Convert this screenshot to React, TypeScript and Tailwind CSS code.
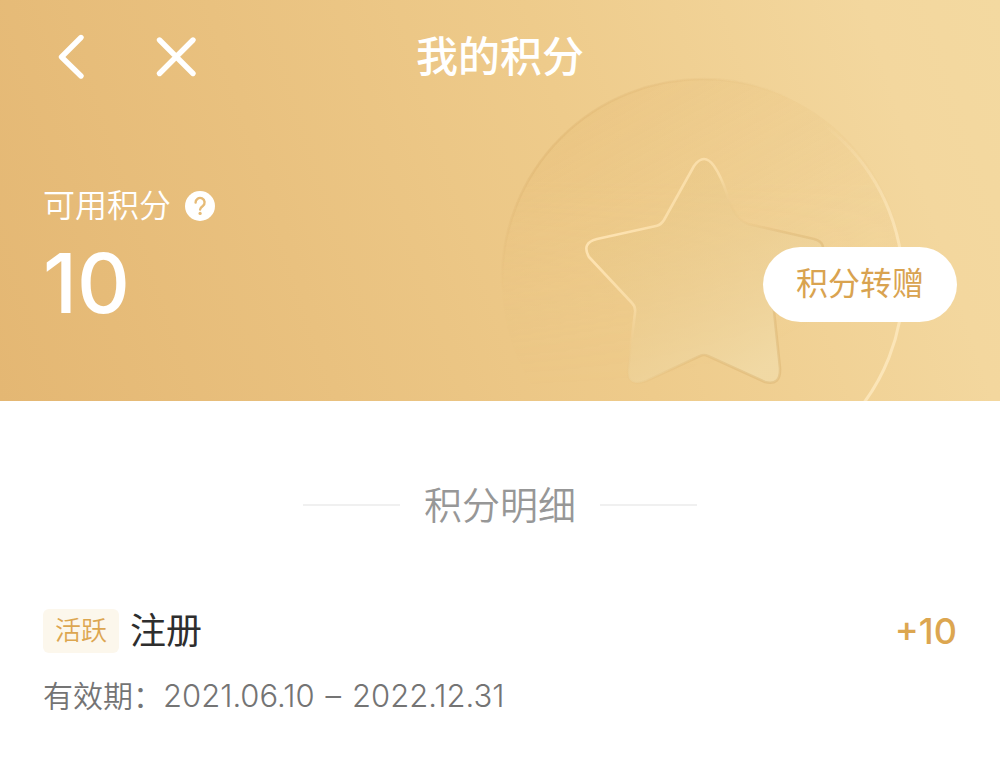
import React from "react";

type PointRecord = {
  tag: string;
  title: string;
  from: string;
  to: string;
  amount: number;
};

const records: PointRecord[] = [
  { tag: "活跃", title: "注册", from: "2021.06.10", to: "2022.12.31", amount: 10 },
];

function Medal() {
  return (
    <svg
      className="pointer-events-none absolute right-0 top-0 h-full w-[500px]"
      viewBox="500 0 500 401"
      fill="none"
      aria-hidden="true"
    >
      <defs>
        <linearGradient id="disc" x1="560" y1="130" x2="700" y2="390" gradientUnits="userSpaceOnUse">
          <stop offset="0" stopColor="#e2b46a" stopOpacity="0.2" />
          <stop offset="0.5" stopColor="#e6bd78" stopOpacity="0.11" />
          <stop offset="1" stopColor="#f0cd8e" stopOpacity="0" />
        </linearGradient>
        <linearGradient id="rimDark" x1="560" y1="140" x2="780" y2="170" gradientUnits="userSpaceOnUse">
          <stop offset="0" stopColor="#d3a560" stopOpacity="0.25" />
          <stop offset="1" stopColor="#d3a560" stopOpacity="0" />
        </linearGradient>
        <linearGradient id="rimFade" x1="0" y1="80" x2="0" y2="290" gradientUnits="userSpaceOnUse">
          <stop offset="0.4" stopColor="#fff" />
          <stop offset="1" stopColor="#fff" stopOpacity="0" />
        </linearGradient>
        <mask id="rimMask" maskUnits="userSpaceOnUse" x="490" y="60" width="300" height="341">
          <rect x="490" y="60" width="300" height="341" fill="url(#rimFade)" />
        </mask>
        <linearGradient id="discFade" x1="0" y1="180" x2="0" y2="390" gradientUnits="userSpaceOnUse">
          <stop offset="0" stopColor="#fff" />
          <stop offset="1" stopColor="#fff" stopOpacity="0" />
        </linearGradient>
        <mask id="discMask" maskUnits="userSpaceOnUse" x="490" y="60" width="430" height="341">
          <rect x="490" y="60" width="430" height="341" fill="url(#discFade)" />
        </mask>
        <linearGradient id="rimLight" x1="780" y1="170" x2="890" y2="270" gradientUnits="userSpaceOnUse">
          <stop offset="0" stopColor="#fde8bd" stopOpacity="0" />
          <stop offset="1" stopColor="#fde8bd" stopOpacity="0.85" />
        </linearGradient>
        <linearGradient id="starFill" x1="640" y1="190" x2="760" y2="370" gradientUnits="userSpaceOnUse">
          <stop offset="0" stopColor="#e6c684" stopOpacity="0.3" />
          <stop offset="0.5" stopColor="#ecd096" stopOpacity="0.5" />
          <stop offset="1" stopColor="#f1dcaa" stopOpacity="0.75" />
        </linearGradient>
        <linearGradient id="starEdge" x1="620" y1="230" x2="770" y2="330" gradientUnits="userSpaceOnUse">
          <stop offset="0" stopColor="#fde2b0" />
          <stop offset="0.3" stopColor="#fbe0ac" stopOpacity="0.75" />
          <stop offset="0.5" stopColor="#e2bd7a" stopOpacity="0.1" />
          <stop offset="0.75" stopColor="#d6ad69" stopOpacity="0.32" />
          <stop offset="1" stopColor="#d6ad69" stopOpacity="0.4" />
        </linearGradient>
      </defs>
      <circle cx="703" cy="280" r="201" fill="url(#disc)" mask="url(#discMask)" />
      <circle cx="703" cy="280" r="201" stroke="url(#rimDark)" strokeWidth="2.5" mask="url(#rimMask)" />
      <circle cx="703" cy="284" r="200" stroke="url(#rimLight)" strokeWidth="3" />
      <path
        d="M694 166 Q704 152 714 166 Q721 176 727 194 Q734 219 748 224 L814 239 Q828 243 820 256 L777 300 Q773 304 774 311 L780 368 Q781 386 765 382 L708 356 Q704 354 700 356 L646 381 Q627 388 628 370 L635 313 Q636 307 632 303 L589 257 Q581 243 597 239 L656 226 Q661 225 664 220 Z"
        fill="url(#starFill)"
        stroke="url(#starEdge)"
        strokeWidth="2.6"
        strokeLinejoin="round"
      />
    </svg>
  );
}

export default function App() {
  return (
    <div className="min-h-screen bg-white font-['Inter','Noto_Sans_CJK_SC',sans-serif]">
      <header className="relative overflow-hidden bg-[linear-gradient(72deg,#e4b773_0%,#e9c17f_30%,#eecb8b_58%,#f3d79e_88%,#f3d9a0_100%)] pb-[73px] text-white">
        <Medal />
        <nav className="relative grid h-[114px] grid-cols-[1fr_auto_1fr] items-center px-12">
          <div className="flex gap-14">
            <button type="button" aria-label="返回" className="flex size-12 items-center justify-center">
              <svg className="size-12" viewBox="0 0 48 48" fill="none" stroke="currentColor" strokeWidth="5.4" strokeLinecap="round" strokeLinejoin="round">
                <path d="M33 4.5 13.5 24 33 43" />
              </svg>
            </button>
            <button type="button" aria-label="关闭" className="flex size-12 items-center justify-center">
              <svg className="size-12" viewBox="0 0 48 48" fill="none" stroke="currentColor" strokeWidth="5.4" strokeLinecap="round">
                <path d="M7.5 7 41 40.5M41 7 7.5 40.5" />
              </svg>
            </button>
          </div>
          <h1 className="text-[42px] font-medium leading-[48px]">我的积分</h1>
        </nav>

        <section className="relative mt-[72px] px-[43px]">
          <div className="flex h-10 items-center gap-[14px]">
            <span className="text-[32px] font-[350] leading-10">可用积分</span>
            <button type="button" aria-label="积分说明" className="flex size-[30px] items-center justify-center rounded-full bg-white">
              <svg className="size-[30px]" viewBox="0 0 30 30" fill="none" stroke="#e6bb77" strokeWidth="2.4" strokeLinecap="round" strokeLinejoin="round">
                <path d="M10.6 11.6a4.5 4.5 0 1 1 7.2 3.4c-1.7 1.2-2.7 1.9-2.7 3.5" />
                <circle cx="15.1" cy="22.4" r="1.6" fill="#e6bb77" stroke="none" />
              </svg>
            </button>
          </div>
          <div className="mt-[14px] flex h-[88px] items-center justify-between">
            <strong className="text-[82px] font-medium leading-[88px]">10</strong>
            <button type="button" className="h-[75px] rounded-full bg-white px-[33px] text-[32px] leading-10 text-[#d9a350]">
              积分转赠
            </button>
          </div>
        </section>
      </header>

      <main className="px-[43px] pb-11 pt-20">
        <div className="flex items-center justify-center gap-6">
          <span className="h-[2px] w-[97px] bg-[#f0f0f0]" />
          <h2 className="text-[38px] font-[350] leading-[48px] text-[#979797]">积分明细</h2>
          <span className="h-[2px] w-[97px] bg-[#f0f0f0]" />
        </div>
        <ul className="mt-20">
          {records.map((record) => (
            <li key={record.title}>
              <div className="flex items-center justify-between">
                <div className="flex items-center gap-[11px]">
                  <span className="rounded-md bg-[#fcf7ec] px-3 text-[26px] font-[350] leading-[44px] text-[#dca650]">
                    {record.tag}
                  </span>
                  <h3 className="text-[36px] leading-[44px] text-[#2e2e2e]">{record.title}</h3>
                </div>
                <span className="text-[36px] font-medium leading-[44px] text-[#dca650]">+{record.amount}</span>
              </div>
              <p className="mt-[23px] flex items-center text-[30px] font-[350] leading-10 text-[#747474]">
                <span>有效期：</span>
                <span className="flex gap-[11px] text-[31px] font-light">
                  <time>{record.from}</time>
                  <span>–</span>
                  <time>{record.to}</time>
                </span>
              </p>
            </li>
          ))}
        </ul>
      </main>
    </div>
  );
}
